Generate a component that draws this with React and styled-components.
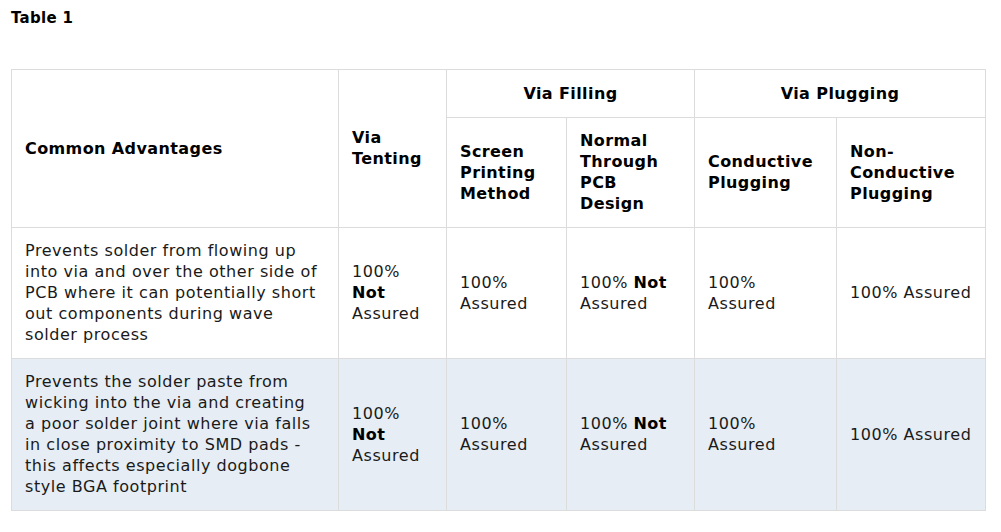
import React from "react";
import styled, { createGlobalStyle } from "styled-components";

const GlobalStyle = createGlobalStyle`
    body{ margin:0; background:#fff; font-family:"DejaVu Sans", "Noto Sans", sans-serif; color:#111; }
`

const Page = styled.div`
    padding:9px 15px 0 11px;
`

const Title = styled.h4`
    margin:0 0 42px 0;
    font-size:15px;
    font-weight:700;
    line-height:18px;
    letter-spacing:0.3px;
    color:#000;
`

const Table = styled.table`
    border-collapse:collapse;
    table-layout:fixed;
    width:974px;
    font-size:16px;
    line-height:21px;
    letter-spacing:0.55px;

    td, th{ border:1px solid #dcdcdc; padding:12px 13px 13px; vertical-align:middle; text-align:left; }
    th{ font-weight:700; color:#000; letter-spacing:0.4px; }
`

const GroupHead = styled.th`
    && { text-align:center; padding:13px 13px 13px; }
`

const Row = styled.tr`
    background:${p => p.shaded ? "#e6edf4" : "#fff"};
`

const Cell = styled.td`
    color:#1a1a1a;
    b{ color:#000; letter-spacing:0.4px; }
`

const widths = [327, 108, 120, 128, 142, 149];

const rows = [
    {
        text: ["Prevents solder from flowing up", "into via and over the other side of", "PCB where it can potentially short", "out components during wave", "solder process"],
    },
    {
        text: ["Prevents the solder paste from", "wicking into the via and creating", "a poor solder joint where via falls", "in close proximity to SMD pads -", "this affects especially dogbone", "style BGA footprint"],
    },
];

function Lines({ items }) {
    return items.map((l, i) => (
        <React.Fragment key={i}>{i > 0 && <br />}{l}</React.Fragment>
    ));
}

function App(){
    return(
        <Page>
            <GlobalStyle />
            <Title>Table 1</Title>
            <Table>
                <colgroup>
                    {widths.map((w, i) => <col key={i} style={{ width: w }} />)}
                </colgroup>
                <thead>
                    <tr>
                        <th rowSpan={2}>Common Advantages</th>
                        <th rowSpan={2}><Lines items={["Via", "Tenting"]} /></th>
                        <GroupHead colSpan={2}>Via Filling</GroupHead>
                        <GroupHead colSpan={2}>Via Plugging</GroupHead>
                    </tr>
                    <tr>
                        <th><Lines items={["Screen", "Printing", "Method"]} /></th>
                        <th><Lines items={["Normal", "Through", "PCB", "Design"]} /></th>
                        <th><Lines items={["Conductive", "Plugging"]} /></th>
                        <th><Lines items={["Non-", "Conductive", "Plugging"]} /></th>
                    </tr>
                </thead>
                <tbody>
                    {rows.map((r, i) => (
                        <Row key={i} shaded={i === 1}>
                            <Cell><Lines items={r.text} /></Cell>
                            <Cell>100%<br /><b>Not</b><br />Assured</Cell>
                            <Cell>100%<br />Assured</Cell>
                            <Cell>100% <b>Not</b><br />Assured</Cell>
                            <Cell>100%<br />Assured</Cell>
                            <Cell>100% Assured</Cell>
                        </Row>
                    ))}
                </tbody>
            </Table>
        </Page>
    )
}

export default App;
